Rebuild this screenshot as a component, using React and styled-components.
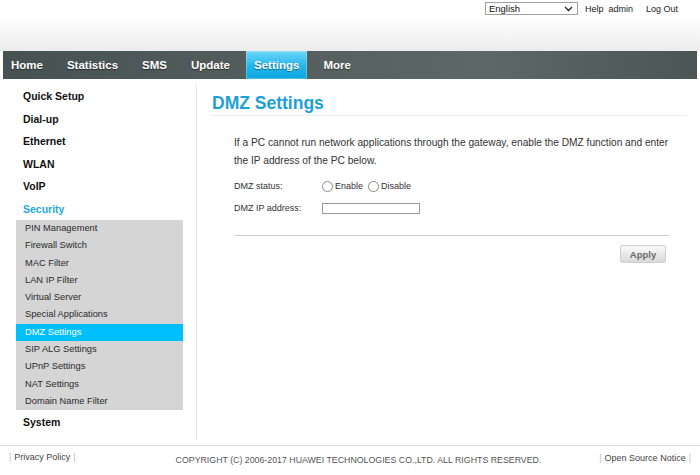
import React from "react";
import styled, { createGlobalStyle } from "styled-components";

const GlobalStyle = createGlobalStyle`
  body {
    margin: 0;
    background: #fff;
    font-family: "Liberation Sans", Arial, sans-serif;
    color: #333;
  }
`;

const Page = styled.div`
  width: 700px;
  height: 475px;
  display: flex;
  flex-direction: column;
  overflow: hidden;
`;

const Header = styled.header`
  height: 51px;
  background: linear-gradient(to bottom, #ffffff 30%, #ececec 100%);
  display: flex;
  justify-content: flex-end;
  align-items: flex-start;
  padding-top: 2px;
  box-sizing: border-box;
`;

const TopLinks = styled.div`
  display: flex;
  align-items: center;
  height: 13px;
  margin-right: 22px;
  font-size: 9px;
  color: #222;
`;

const LangSelect = styled.div`
  width: 93px;
  height: 13px;
  box-sizing: border-box;
  border: 1px solid #a0a0a0;
  background: #fff;
  display: flex;
  align-items: center;
  justify-content: space-between;
  padding: 0 4px 0 3px;
  font-size: 9.5px;
  color: #111;
  margin-right: 7px;
`;

const TopLink = styled.span`
  margin-left: ${(p) => p.$gap || 0}px;
`;

const Nav = styled.nav`
  height: 28px;
  margin: 0 3px;
  display: flex;
  align-items: stretch;
  background: linear-gradient(to right, #465152 0%, #56605f 45%, #5d6768 70%, #4b5556 100%);
  gap: 8px;
`;

const NavItem = styled.div`
  display: flex;
  align-items: center;
  padding: 0 8px;
  font-size: 11.5px;
  font-weight: bold;
  color: #fff;
  text-shadow: 0 1px 1px rgba(0, 0, 0, 0.45);
  ${(p) =>
    p.$active &&
    `
    background: linear-gradient(to bottom, #6fd6f7 0%, #22b6ec 55%, #0ba6e0 100%);
    box-shadow: inset 0 0 0 1px rgba(255,255,255,0.25);
  `}
`;

const Body = styled.div`
  flex: 1;
  display: flex;
`;

const Sidebar = styled.aside`
  width: 196px;
  margin-top: 6px;
  height: 355px;
  border-right: 1px solid #e6e6e6;
  flex-shrink: 0;
`;

const MenuItem = styled.div`
  height: 22.5px;
  line-height: 22.5px;
  padding-left: 23px;
  font-size: 10.5px;
  font-weight: bold;
  color: ${(p) => (p.$active ? "#25a8e0" : "#111")};
`;

const SubMenu = styled.div`
  margin-left: 16px;
  width: 167px;
  background: #d5d5d5;
  margin-bottom: 1px;
`;

const SubItem = styled.div`
  height: 17.3px;
  line-height: 17.3px;
  padding-left: 9px;
  font-size: 9.3px;
  color: ${(p) => (p.$active ? "#fff" : "#2a2a2a")};
  background: ${(p) => (p.$active ? "#00bfff" : "transparent")};
`;

const Content = styled.main`
  flex: 1;
  padding: 13px 0 0 15px;
`;

const Title = styled.h1`
  margin: 0;
  font-size: 17.5px;
  line-height: 22px;
  font-weight: bold;
  color: #1c9fd8;
  padding-bottom: 1px;
  border-bottom: 1px solid #ececec;
  width: 475px;
`;

const Section = styled.div`
  margin-left: 22px;
  width: 435px;
  padding-top: ${(p) => (p.$flush ? 0 : 18)}px;
`;

const Intro = styled.p`
  margin: 0;
  width: 442px;
  font-size: 10.2px;
  line-height: 18px;
  color: #333;
`;

const FormRow = styled.div`
  display: flex;
  align-items: center;
  height: 22px;
  font-size: 9px;
  color: #333;
  margin-top: ${(p) => p.$top || 0}px;
`;

const Label = styled.span`
  width: 88px;
`;

const Radio = styled.span`
  width: 9px;
  height: 9px;
  border: 1px solid #8a8a8a;
  border-radius: 50%;
  background: #fff;
  margin-right: 2px;
  margin-left: ${(p) => p.$gap || 0}px;
`;

const TextInput = styled.div`
  width: 98px;
  height: 11px;
  border: 1px solid #9a9a9a;
  background: #fff;
  box-sizing: border-box;
`;

const Divider = styled.div`
  height: 0;
  border-top: 1px solid #d0d0d0;
  margin-top: 16px;
`;

const Actions = styled.div`
  display: flex;
  justify-content: flex-end;
  padding: 9px 3px 0 0;
`;

const Button = styled.div`
  width: 46px;
  height: 18px;
  box-sizing: border-box;
  border: 1px solid #cfcfcf;
  border-radius: 2px;
  background: linear-gradient(to bottom, #fafafa 0%, #e6e6e6 60%, #d9d9d9 100%);
  font-size: 9.5px;
  font-weight: bold;
  color: #6b6b6b;
  display: flex;
  align-items: center;
  justify-content: center;
`;

const Footer = styled.footer`
  height: 29px;
  margin-top: 1px;
  border-top: 1px solid #dcdcdc;
  display: flex;
  justify-content: space-between;
  font-size: 9px;
  color: #555;
  padding: 0 6px;
`;

const FooterLink = styled.span`
  margin-top: ${(p) => p.$top}px;
  color: #444;
`;

const Pipe = styled.span`
  color: #bbb;
  margin: 0 3px;
`;

const Copyright = styled.span`
  margin-top: 9px;
  color: #555;
  margin-left: 42px;
  font-size: 8.8px;
`;

const submenu = [
  "PIN Management",
  "Firewall Switch",
  "MAC Filter",
  "LAN IP Filter",
  "Virtual Server",
  "Special Applications",
  "DMZ Settings",
  "SIP ALG Settings",
  "UPnP Settings",
  "NAT Settings",
  "Domain Name Filter",
];

const navItems = ["Home", "Statistics", "SMS", "Update", "Settings", "More"];

const App = () => {
  return (
    <Page>
      <GlobalStyle />
      <Header>
        <TopLinks>
          <LangSelect>
            English
            <svg width="9" height="6" viewBox="0 0 9 6">
              <path d="M1 1 L4.5 4.5 L8 1" fill="none" stroke="#222" strokeWidth="1.3" />
            </svg>
          </LangSelect>
          <TopLink>Help</TopLink>
          <TopLink $gap={5}>admin</TopLink>
          <TopLink $gap={13}>Log Out</TopLink>
        </TopLinks>
      </Header>
      <Nav>
        {navItems.map((n) => (
          <NavItem key={n} $active={n === "Settings"}>
            {n}
          </NavItem>
        ))}
      </Nav>
      <Body>
        <Sidebar>
          <MenuItem>Quick Setup</MenuItem>
          <MenuItem>Dial-up</MenuItem>
          <MenuItem>Ethernet</MenuItem>
          <MenuItem>WLAN</MenuItem>
          <MenuItem>VoIP</MenuItem>
          <MenuItem $active>Security</MenuItem>
          <SubMenu>
            {submenu.map((s) => (
              <SubItem key={s} $active={s === "DMZ Settings"}>
                {s}
              </SubItem>
            ))}
          </SubMenu>
          <MenuItem>System</MenuItem>
        </Sidebar>
        <Content>
          <Title>DMZ Settings</Title>
          <Section>
            <Intro>
              If a PC cannot run network applications through the gateway,
              enable the DMZ function and enter the IP address of the PC below.
            </Intro>
            <FormRow $top={5}>
              <Label>DMZ status:</Label>
              <Radio />
              Enable
              <Radio $gap={5} />
              Disable
            </FormRow>
            <FormRow>
              <Label>DMZ IP address:</Label>
              <TextInput />
            </FormRow>
          </Section>
          <Section $flush>
            <Divider />
            <Actions>
              <Button>Apply</Button>
            </Actions>
          </Section>
        </Content>
      </Body>
      <Footer>
        <FooterLink $top={6}>
          <Pipe>|</Pipe>Privacy Policy<Pipe>|</Pipe>
        </FooterLink>
        <Copyright>COPYRIGHT (C) 2006-2017 HUAWEI TECHNOLOGIES CO.,LTD. ALL RIGHTS RESERVED.</Copyright>
        <FooterLink $top={7}>
          <Pipe>|</Pipe>Open Source Notice<Pipe>|</Pipe>
        </FooterLink>
      </Footer>
    </Page>
  );
};

export default App;
